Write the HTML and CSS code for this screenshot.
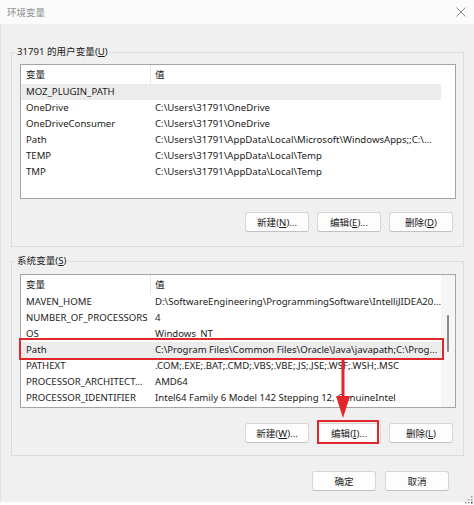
FILE: index.html
```html
<!DOCTYPE html>
<html lang="zh-CN">
<head>
<meta charset="utf-8">
<title>环境变量</title>
<link rel="stylesheet" href="styles.css">
</head>
<body>
<div class="window">
  <div class="titlebar">
    <span class="title">环境变量</span>
    <svg class="close" width="10" height="10" viewBox="0 0 10 10"><path d="M0.5 0.5 L9.5 9.5 M9.5 0.5 L0.5 9.5" stroke="#8a8a8a" stroke-width="1" fill="none"/></svg>
  </div>
  <div class="body">
    <fieldset class="group group-user">
      <legend>31791 的用户变量(<u>U</u>)</legend>
      <div class="list list-user">
        <div class="list-main">
          <div class="row head"><span class="c1">变量</span><span class="c2">值</span></div>
          <div class="row sel"><span class="c1">MOZ_PLUGIN_PATH</span><span class="c2"></span></div>
          <div class="row"><span class="c1">OneDrive</span><span class="c2">C:\Users\31791\OneDrive</span></div>
          <div class="row"><span class="c1">OneDriveConsumer</span><span class="c2">C:\Users\31791\OneDrive</span></div>
          <div class="row"><span class="c1">Path</span><span class="c2">C:\Users\31791\AppData\Local\Microsoft\WindowsApps;;C:\...</span></div>
          <div class="row"><span class="c1">TEMP</span><span class="c2">C:\Users\31791\AppData\Local\Temp</span></div>
          <div class="row"><span class="c1">TMP</span><span class="c2">C:\Users\31791\AppData\Local\Temp</span></div>
        </div>
        <div class="vscroll blank"></div>
      </div>
      <div class="btns">
        <button class="btn">新建(<u>N</u>)...</button>
        <button class="btn">编辑(<u>E</u>)...</button>
        <button class="btn">删除(<u>D</u>)</button>
      </div>
    </fieldset>

    <fieldset class="group group-sys">
      <legend>系统变量(<u>S</u>)</legend>
      <div class="list list-sys">
        <div class="list-main">
          <div class="row head"><span class="c1">变量</span><span class="c2">值</span></div>
          <div class="row"><span class="c1">MAVEN_HOME</span><span class="c2">D:\SoftwareEngineering\ProgrammingSoftware\IntelliJIDEA20...</span></div>
          <div class="row"><span class="c1">NUMBER_OF_PROCESSORS</span><span class="c2">4</span></div>
          <div class="row"><span class="c1">OS</span><span class="c2">Windows_NT</span></div>
          <div class="row sel marked"><span class="c1">Path</span><span class="c2">C:\Program Files\Common Files\Oracle\Java\javapath;C:\Prog...</span></div>
          <div class="row"><span class="c1">PATHEXT</span><span class="c2">.COM;.EXE;.BAT;.CMD;.VBS;.VBE;.JS;.JSE;.WSF;.WSH;.MSC</span></div>
          <div class="row"><span class="c1">PROCESSOR_ARCHITECT...</span><span class="c2">AMD64</span></div>
          <div class="row"><span class="c1">PROCESSOR_IDENTIFIER</span><span class="c2">Intel64 Family 6 Model 142 Stepping 12, GenuineIntel</span></div>
        </div>
        <div class="vscroll"><div class="thumb"></div></div>
      </div>
      <div class="btns btns-sys">
        <button class="btn">新建(<u>W</u>)...</button>
        <button class="btn marked">编辑(<u>I</u>)...</button>
        <button class="btn">删除(<u>L</u>)</button>
      </div>
    </fieldset>

    <div class="footer">
      <button class="btn">确定</button>
      <button class="btn">取消</button>
    </div>
  </div>

  <svg class="arrow" width="20" height="62" viewBox="0 0 20 62">
    <line x1="10" y1="0" x2="10" y2="40" stroke="#e4252b" stroke-width="3"/>
    <polygon points="3,36 17,36 10,58" fill="#e4252b"/>
  </svg>
  <svg class="grip" width="9" height="9" viewBox="0 0 9 9">
    <rect x="7" y="1" width="1.5" height="1.5" fill="#9a9a9a"/>
    <rect x="4" y="4" width="1.5" height="1.5" fill="#9a9a9a"/>
    <rect x="7" y="4" width="1.5" height="1.5" fill="#9a9a9a"/>
    <rect x="1" y="7" width="1.5" height="1.5" fill="#9a9a9a"/>
    <rect x="4" y="7" width="1.5" height="1.5" fill="#9a9a9a"/>
    <rect x="7" y="7" width="1.5" height="1.5" fill="#333"/>
  </svg>
</div>
</body>
</html>
```

FILE: styles.css
```css
* { box-sizing: border-box; }
html, body { margin: 0; padding: 0; background: #ffffff; }
body {
  font-family: "Noto Sans", "Noto Sans CJK SC", sans-serif;
  font-size: 9.6px;
  color: #1a1a1a;
}
.window {
  position: relative;
  width: 474px;
  height: 505px;
  background: #ffffff;
  overflow: hidden;
}
.titlebar {
  height: 24px;
  background: #fbfbfb;
  display: flex;
  align-items: center;
  justify-content: space-between;
  padding: 0 8px 0 7px;
}
.title { color: #8e8e8e; font-size: 9.5px; }
.body {
  height: 478px;
  background: #f0f0f0;
  border-left: 1px solid #e2e2e2;
  padding: 20px 10px 0 10px;
}
.group {
  margin: 0;
  min-width: 0;
  border: 1px solid #dcdcdc;
  padding: 4px 8px 14px 8px;
}
.group legend {
  line-height: 16px;
  padding: 0 2px;
  margin-left: -5px;
  color: #1a1a1a;
}
.group-sys { margin-top: 6px; padding: 5px 8px 12px 8px; }
.list {
  display: flex;
  background: #ffffff;
  border: 1px solid #a4a4a4;
  height: 135px;
  margin-right: -1px;
}
.list-sys { height: 134px; }
.list-main { flex: 1; min-width: 0; }
.row {
  position: relative;
  display: flex;
  height: 16px;
  line-height: 16px;
  white-space: nowrap;
}
.row.head { height: 19px; line-height: 19px; }
.row.sel { background: #ececec; }
.c1 {
  width: 129px;
  flex: none;
  padding-left: 5px;
  overflow: hidden;
}
.c2 {
  flex: 1;
  min-width: 0;
  padding-left: 5px;
  overflow: hidden;
}
.head .c2 { border-left: 1px solid #e6e6e6; padding-left: 4px; }
.row.marked::after {
  content: "";
  position: absolute;
  top: -4px;
  bottom: -2px;
  left: -2px;
  right: -3px;
  border: 2px solid #e0282c;
}
.vscroll {
  width: 14px;
  flex: none;
  background: #f5f5f5;
  padding-left: 6px;
}
.vscroll.blank { background: #ffffff; }
.thumb {
  width: 2px;
  height: 37px;
  margin-top: 40px;
  background: #8a8a8a;
  border-radius: 1px;
}
.btns {
  display: flex;
  justify-content: flex-end;
  gap: 8px;
  margin-top: 13px;
  margin-right: 2px;
}
.btns-sys { margin-top: 15px; }
.btn {
  position: relative;
  width: 64px;
  height: 20px;
  padding: 0;
  font: inherit;
  color: #1a1a1a;
  background: #fdfdfd;
  border: 1px solid #d6d6d6;
  border-bottom-color: #c2c2c2;
  border-radius: 3px;
}
.btn u { text-underline-offset: 1px; }
.btn.marked::after {
  content: "";
  position: absolute;
  top: -4px;
  bottom: -2px;
  left: -1px;
  right: 1px;
  border: 2px solid #e0282c;
}
.footer {
  display: flex;
  justify-content: flex-end;
  gap: 9px;
  margin-top: 15px;
  padding-right: 15px;
}
.arrow { position: absolute; left: 333px; top: 360px; }
.grip { position: absolute; right: 1px; bottom: 1px; }
```
